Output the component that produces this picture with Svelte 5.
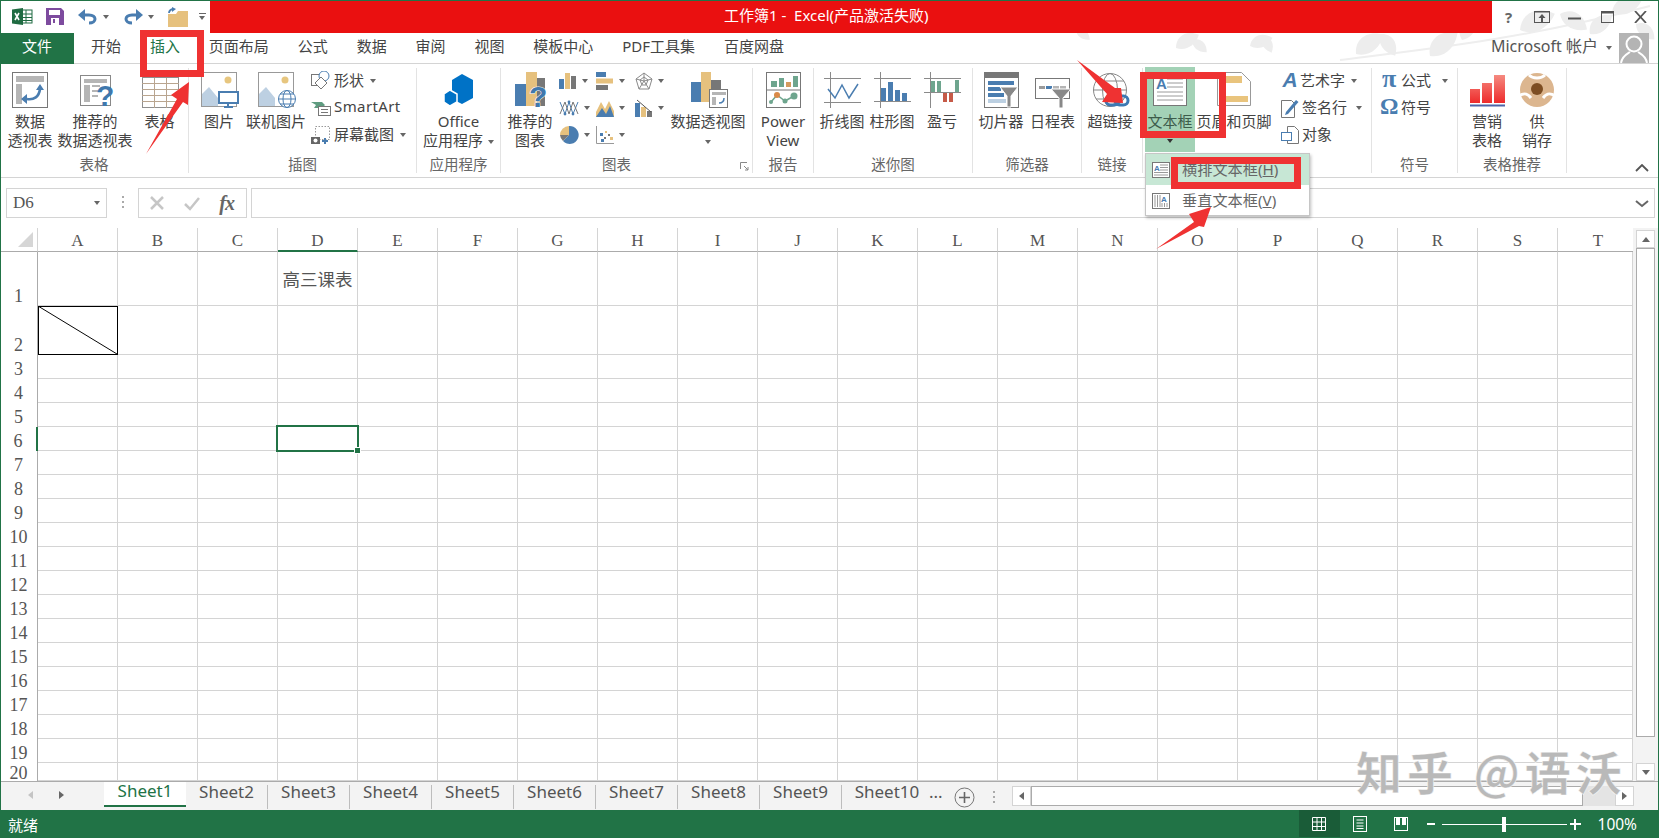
<script>
  const tabs = ['开始', '插入', '页面布局', '公式', '数据', '审阅', '视图', '模板中心', 'PDF工具集', '百度网盘'];
  const columns = 'ABCDEFGHIJKLMNOPQRST'.split('');
  const rows = Array.from({ length: 20 }, (_, i) => i + 1);
  const sheets = ['Sheet1', 'Sheet2', 'Sheet3', 'Sheet4', 'Sheet5', 'Sheet6', 'Sheet7', 'Sheet8', 'Sheet9', 'Sheet10'];
  // leaves in the title bar background: x, y, angle, scale
  const leaves = [
    [1076, 30, 35, 0.7], [1176, 48, -30, 1.1], [1192, 40, 40, 0.8], [1250, 46, -20, 1], [1262, 36, 60, 0.8],
    [1356, 54, -35, 1.4], [1380, 34, 55, 1.1], [1430, 56, -40, 1.5], [1462, 40, -60, 1.2], [1520, 30, -25, 1.6],
    [1560, 14, 30, 1.3], [1590, 34, -40, 1.2], [1612, 12, -20, 1.3], [1636, 24, 40, 1]
  ];
</script>

<div class="window">
  <header class="top">
    <svg class="leaves" width="1659" height="64" viewBox="0 0 1659 64">
      <path d="M1340 60 C1420 50 1520 40 1650 6" fill="none" stroke="#eee" stroke-width="2" />
      {#each leaves as [x, y, a, s]}
        <path d="M0 0 C5 -9 16 -10 24 0 C16 7 6 7 0 0Z" fill="#ededed" transform="translate({x} {y}) rotate({a}) scale({s})" />
      {/each}
    </svg>

    <div class="titlebar">
      <div class="qat">
        <svg class="q-excel" width="21" height="17" viewBox="0 0 21 17">
          <rect x="9" y="2" width="11" height="13" fill="#fff" stroke="#1f6b42" />
          <path d="M9 6h11M9 9.500h11M9 12.500h11M14 2v13" stroke="#1f6b42" fill="none" />
          <path d="M0 1.500 11 0v17L0 15.500Z" fill="#1f6b42" />
          <path d="M3 5l4 7M7 5l-4 7" stroke="#fff" stroke-width="1.600" />
        </svg>
        <svg class="q-save" width="18" height="17" viewBox="0 0 18 17">
          <path d="M0 0h15l3 3v14H0Z" fill="#7d4b9e" />
          <rect x="3" y="2" width="11" height="5" fill="#fff" />
          <rect x="5" y="10" width="8" height="7" fill="#fff" />
          <rect x="7" y="11" width="2" height="4" fill="#7d4b9e" />
        </svg>
        <svg class="q-undo" width="20" height="16" viewBox="0 0 20 16">
          <path d="M5 6h6c4 0 6 2 6 4s-2 4-6 4" fill="none" stroke="#4a7db0" stroke-width="3" />
          <path d="M7 0v12L0 6Z" fill="#4a7db0" />
        </svg>
        <i class="caret"></i>
        <svg class="q-redo" width="20" height="16" viewBox="0 0 20 16">
          <path d="M15 6H9C5 6 3 8 3 10s2 4 6 4" fill="none" stroke="#4a7db0" stroke-width="3" />
          <path d="M13 0v12l7-6Z" fill="#4a7db0" />
        </svg>
        <i class="caret"></i>
        <svg class="q-open" width="20" height="20" viewBox="0 0 20 20">
          <path d="M0 7h8l2-3h10v16H0Z" fill="#e6c17e" />
          <path d="M1 6c0-2 2-4 4-4" fill="none" stroke="#4a7db0" stroke-width="1.800" />
          <path d="M4 0l4 2-4 3Z" fill="#4a7db0" />
        </svg>
        <i class="more"></i>
      </div>
      <div class="redbar"><span>工作簿1 -&nbsp; Excel(产品激活失败)</span></div>
      <div class="controls">
        <span class="ctl help">?</span>
        <span class="ctl">
          <svg width="16" height="12" viewBox="0 0 16 12"><rect x=".5" y=".5" width="15" height="11" fill="none" stroke="#555" /><path d="M1 1h14" stroke="#555" /><path d="M8 3 4.500 7H7v4h2V7h2.500Z" fill="#555" /></svg>
        </span>
        <span class="ctl">
          <svg width="13" height="12" viewBox="0 0 13 12"><path d="M0 7.500h13" stroke="#555" stroke-width="2" /></svg>
        </span>
        <span class="ctl">
          <svg width="13" height="12" viewBox="0 0 13 12"><rect x=".5" y=".5" width="12" height="11" fill="none" stroke="#555" /><path d="M0 1.500h13" stroke="#555" stroke-width="2" /></svg>
        </span>
        <span class="ctl">
          <svg width="13" height="12" viewBox="0 0 13 12"><path d="M1 0l11 12M12 0 1 12" stroke="#555" stroke-width="1.800" /></svg>
        </span>
      </div>
    </div>

    <nav class="tabbar">
      <span class="file">文件</span>
      <ul>
        {#each tabs as tab}
          <li class:active={tab === '插入'}>{tab}</li>
        {/each}
      </ul>
      <div class="account">
        <span>Microsoft 帐户</span>
        <i class="caret"></i>
        <svg width="30" height="30" viewBox="0 0 30 30">
          <rect width="30" height="30" fill="#b4b4b4" />
          <circle cx="15" cy="11" r="7.500" fill="none" stroke="#fff" stroke-width="2" />
          <path d="M2 30c1-7 6-9 9-11M28 30c-1-7-6-9-9-11" fill="none" stroke="#fff" stroke-width="2" />
        </svg>
      </div>
    </nav>
  </header>

  <section class="ribbon">
    <div class="group g-tables">
      <div class="body">
        <div class="big">
          <svg viewBox="0 0 40 36">
            <rect x="2.500" y=".5" width="35" height="35" fill="#fff" stroke="#777" />
            <path d="M6 4h28v6H6ZM6 12h6v20H6Z" fill="#b5b5b5" />
            <path d="M17 27c7 1 12-2 13-10" fill="none" stroke="#4a7db0" stroke-width="2.600" />
            <path d="M26 18h8l-4-6ZM17 22v10l-6-5Z" fill="#4a7db0" />
          </svg>
          <span>数据<br />透视表</span>
        </div>
        <div class="big">
          <svg viewBox="0 0 40 36">
            <rect x="5.500" y="3.500" width="30" height="30" fill="#fff" stroke="#888" />
            <path d="M9 7h23v4H9ZM9 13h6v17H9ZM17 13h8v2h-8ZM17 18h6v2h-6ZM17 23h6v2h-6Z" fill="#b5b5b5" />
            <text x="21" y="34" class="qmark">?</text>
          </svg>
          <span>推荐的<br />数据透视表</span>
        </div>
        <div class="big">
          <svg viewBox="0 0 40 36">
            <rect x="2.500" y="5.500" width="36" height="30" fill="#fff" stroke="#8f8f8f" />
            <path d="M2 11.500h37M2 17.500h37M2 23.500h37M2 29.500h37M14.500 6v30M26.500 6v30" stroke="#b9a58f" fill="none" />
          </svg>
          <span>表格</span>
        </div>
      </div>
      <div class="label">表格</div>
    </div>

    <div class="group g-illus">
      <div class="body">
        <div class="big">
          <svg viewBox="0 0 40 36">
            <rect x="2.500" y=".5" width="35" height="34" fill="#fff" stroke="#999" />
            <circle cx="29" cy="8" r="3.500" fill="#e7c67f" />
            <path d="M3 34V22l7-7 9 11v8Z" fill="#bdd0e2" />
            <rect x="20" y="20" width="19" height="11" fill="#fff" stroke="#4a7db0" stroke-width="2" />
            <path d="M29 31v3M25 35h9" stroke="#4a7db0" stroke-width="2" />
          </svg>
          <span>图片</span>
        </div>
        <div class="big">
          <svg viewBox="0 0 40 36">
            <rect x="2.500" y=".5" width="35" height="34" fill="#fff" stroke="#999" />
            <circle cx="29" cy="8" r="3.500" fill="#e7c67f" />
            <path d="M3 34V22l7-7 9 11v8Z" fill="#bdd0e2" />
            <circle cx="31" cy="27" r="8.500" fill="#fff" stroke="#4a7db0" />
            <ellipse cx="31" cy="27" rx="4" ry="8.500" fill="none" stroke="#4a7db0" />
            <path d="M22.500 27h17M24 22h14M24 32h14" stroke="#4a7db0" />
          </svg>
          <span>联机图片</span>
        </div>
        <div class="smallcol">
          <div class="small">
            <svg width="20" height="20" viewBox="0 0 20 20">
              <rect x=".5" y="3.500" width="11" height="11" fill="#fff" stroke="#777" />
              <circle cx="13" cy="5" r="5" fill="#fff" stroke="#4a7db0" />
              <path d="M10 6 16 12 10 18 4 12Z" fill="#fff" stroke="#777" />
            </svg>
            <span>形状</span><i class="caret"></i>
          </div>
          <div class="small">
            <svg width="20" height="20" viewBox="0 0 20 20">
              <path d="M0 4h11l3 3-3 3H3l2-3Z" fill="#5f9c80" />
              <rect x="7.500" y="8.500" width="12" height="9" fill="#fff" stroke="#777" />
              <path d="M10 11.500h7M10 14.500h7" stroke="#777" />
            </svg>
            <span class="latin">SmartArt</span>
          </div>
          <div class="small">
            <svg width="20" height="20" viewBox="0 0 20 20">
              <rect x="4.500" y="1.500" width="14" height="13" fill="none" stroke="#999" stroke-dasharray="1.500 1.500" />
              <rect x="0" y="12" width="9" height="7" fill="#666" />
              <circle cx="4.500" cy="15.500" r="2" fill="#fff" />
              <path d="M14 13v6M11 16h6" stroke="#4a7db0" stroke-width="2" />
            </svg>
            <span>屏幕截图</span><i class="caret"></i>
          </div>
        </div>
      </div>
      <div class="label">插图</div>
    </div>

    <div class="group g-apps">
      <div class="body">
        <div class="big">
          <svg viewBox="0 0 40 36">
            <path d="M23 2 34 8v18l-11 6-10-5V8Z" fill="#0072c6" />
            <path d="M11 18l7 4v8l-7 4-6-4v-8Z" fill="#0072c6" stroke="#fff" stroke-width="1.500" />
          </svg>
          <span>Office<br />应用程序<i class="caret inline"></i></span>
        </div>
      </div>
      <div class="label">应用程序</div>
    </div>

    <div class="group g-charts">
      <div class="body">
        <div class="big">
          <svg viewBox="0 0 40 36">
            <rect x="5" y="12" width="11" height="22" fill="#4a7db0" />
            <rect x="16" y="0" width="11" height="34" fill="#e6c17e" />
            <rect x="27" y="6" width="8" height="28" fill="#777" />
            <text x="19" y="35" class="qmark outlined">?</text>
          </svg>
          <span>推荐的<br />图表</span>
        </div>
        <div class="charts">
          <div class="mini">
            <svg width="18" height="18" viewBox="0 0 18 18"><path d="M0 7h5v10H0Z" fill="#4a7db0" /><path d="M6 1h5v16H6Z" fill="#e6c17e" /><path d="M12 4h5v13h-5Z" fill="#777" /></svg>
            <i class="caret"></i>
          </div>
          <div class="mini">
            <svg width="18" height="18" viewBox="0 0 18 18"><path d="M0 0h10v5H0Z" fill="#4a7db0" /><path d="M0 6.500h17v5H0Z" fill="#e6c17e" /><path d="M0 13h12v5H0Z" fill="#777" /></svg>
            <i class="caret"></i>
          </div>
          <div class="mini">
            <svg width="18" height="18" viewBox="0 0 18 18"><path d="M9 1 17 7 14 17H4L1 7ZM9 5l4 3-2 5H7L5 8ZM9 1v8M1 7l8 2M17 7 9 9M4 17 9 9M14 17 9 9" fill="none" stroke="#8a8a8a" /></svg>
            <i class="caret"></i>
          </div>
          <div class="mini">
            <svg width="20" height="18" viewBox="0 0 20 18"><path d="M1 3 6 15 10 3 14 15 19 3" fill="none" stroke="#4a7db0" /><path d="M1 15 6 3 10 15 14 3 19 15" fill="none" stroke="#777" /><circle cx="10" cy="3" r="1.400" fill="#4a7db0" /><circle cx="6" cy="15" r="1.400" fill="#4a7db0" /><circle cx="14" cy="15" r="1.400" fill="#4a7db0" /></svg>
            <i class="caret"></i>
          </div>
          <div class="mini">
            <svg width="18" height="18" viewBox="0 0 18 18"><path d="M0 13 5 3 9 10 13 2 18 12V18H0Z" fill="#e6c17e" /><path d="M0 18 6 9 10 15 14 7 18 18Z" fill="#4a7db0" /></svg>
            <i class="caret"></i>
          </div>
          <div class="mini">
            <svg width="18" height="18" viewBox="0 0 18 18"><path d="M0 4h5v14H0Z" fill="#4a7db0" /><path d="M6 8h5v10H6Z" fill="#e6c17e" /><path d="M12 12h5v6h-5Z" fill="#777" /><path d="M2 1l7 6 7 6" fill="none" stroke="#555" /></svg>
            <i class="caret"></i>
          </div>
          <div class="mini">
            <svg width="20" height="20" viewBox="0 0 20 20"><path d="M10 10V1a9 9 0 1 1-6 15Z" fill="#4a7db0" /><path d="M10 10H1a9 9 0 0 1 9-9Z" fill="#e6c17e" /><path d="M10 10 4 16a9 9 0 0 1-3-6Z" fill="#777" /></svg>
            <i class="caret"></i>
          </div>
          <div class="mini">
            <svg width="18" height="18" viewBox="0 0 18 18"><path d="M.5 0v17.500H18" fill="none" stroke="#999" /><path d="M4 7h3v3H4ZM5 13h3v3H5Z" fill="#4a7db0" /><path d="M9 5h2v2H9ZM14 11h3v3h-3Z" fill="#e6c17e" /><path d="M12 8h2v2h-2ZM8 11h2v2H8Z" fill="#777" /></svg>
            <i class="caret"></i>
          </div>
        </div>
        <div class="big">
          <svg viewBox="0 0 40 36">
            <rect x="3" y="10" width="10" height="20" fill="#4a7db0" />
            <rect x="13" y="0" width="10" height="30" fill="#e6c17e" />
            <rect x="23" y="8" width="10" height="22" fill="#777" />
            <rect x="21.500" y="17.500" width="18" height="18" fill="#fff" stroke="#777" />
            <path d="M24 20h14v3H24ZM24 25h4v8h-4Z" fill="#b5b5b5" />
            <path d="M31 31c3 0 5-1 5-5" fill="none" stroke="#4a7db0" stroke-width="1.500" />
          </svg>
          <span>数据透视图<br /><i class="caret solo"></i></span>
        </div>
      </div>
      <div class="label">图表</div>
      <svg class="launcher" width="9" height="9" viewBox="0 0 9 9"><path d="M.5 7V.5H7M4 4l4 4M8 5v3H5" fill="none" stroke="#888" /></svg>
    </div>

    <div class="group g-report">
      <div class="body">
        <div class="big">
          <svg viewBox="0 0 40 36">
            <rect x="3.500" y=".5" width="34" height="35" fill="#fff" stroke="#777" />
            <path d="M3 18h35" stroke="#777" />
            <path d="M8 9h6v6H8Z" fill="#6ea58e" /><path d="M16 6h5v9h-5Z" fill="#6ea58e" /><path d="M23 10h5v5h-5Z" fill="#d49a5e" /><path d="M30 4h5v11h-5Z" fill="#6ea58e" />
            <path d="M8 30 14 23 22 29 31 24" fill="none" stroke="#6ea58e" stroke-width="1.500" />
            <circle cx="14" cy="23" r="3" fill="#d98a48" /><circle cx="8" cy="30" r="2" fill="#6ea58e" /><circle cx="22" cy="29" r="2.500" fill="#6ea58e" /><circle cx="31" cy="24" r="3.500" fill="#6ea58e" />
          </svg>
          <span>Power<br />View</span>
        </div>
      </div>
      <div class="label">报告</div>
    </div>

    <div class="group g-spark">
      <div class="body">
        <div class="big">
          <svg viewBox="0 0 40 36">
            <path d="M2 6.500h37M2 30.500h37M8.500 0v36" stroke="#8a8a8a" fill="none" />
            <path d="M6 17 13 26 20 13 27 26 36 12" fill="none" stroke="#4a7db0" stroke-width="1.500" />
          </svg>
          <span>折线图</span>
        </div>
        <div class="big">
          <svg viewBox="0 0 40 36">
            <path d="M2 6.500h37M2 29.500h37M8.500 0v36" stroke="#8a8a8a" fill="none" />
            <path d="M9 16h5v13H9ZM16 10h5v19h-5ZM23 18h5v11h-5ZM30 21h5v8h-5Z" fill="#4a7db0" />
          </svg>
          <span>柱形图</span>
        </div>
        <div class="big">
          <svg viewBox="0 0 40 36">
            <path d="M2 6.500h37M2 20.500h37M8.500 0v36" stroke="#8a8a8a" fill="none" />
            <path d="M9 9h4v11H9ZM15 9h4v11h-4ZM33 8h4v12h-4Z" fill="#6ea58e" />
            <path d="M21 21h4v9h-4ZM27 21h4v9h-4Z" fill="#c65a48" />
          </svg>
          <span>盈亏</span>
        </div>
      </div>
      <div class="label">迷你图</div>
    </div>

    <div class="group g-filter">
      <div class="body">
        <div class="big">
          <svg viewBox="0 0 40 36">
            <rect x="3.500" y=".5" width="34" height="35" fill="#fff" stroke="#777" />
            <path d="M3 0h35v6H3Z" fill="#777" />
            <path d="M7 9h26v4H7ZM7 15h13v4H7Z" fill="#4a7db0" /><path d="M7 21h16v4H7Z" fill="#4a7db0" /><path d="M7 27h18v4H7Z" fill="#bcd0e2" />
            <path d="M19 15h18l-7 9v11h-4V24Z" fill="#888" stroke="#fff" />
          </svg>
          <span>切片器</span>
        </div>
        <div class="big">
          <svg viewBox="0 0 40 36">
            <path d="M2 6h34v3H2Z" fill="#777" />
            <rect x="2.500" y="6.500" width="34" height="20" fill="#fff" stroke="#777" />
            <path d="M6 14h6v3H6Z" fill="#9a9a9a" /><path d="M13 14h6v3h-6Z" fill="#4a7db0" /><path d="M20 14h6v3h-6ZM27 14h6v3h-6Z" fill="#b5b5b5" />
            <path d="M18 17h20l-8 9v10h-4V26Z" fill="#888" stroke="#fff" />
          </svg>
          <span>日程表</span>
        </div>
      </div>
      <div class="label">筛选器</div>
    </div>

    <div class="group g-links">
      <div class="body">
        <div class="big">
          <svg viewBox="0 0 40 36">
            <circle cx="20" cy="18" r="16.500" fill="#fff" stroke="#888" />
            <ellipse cx="20" cy="18" rx="7.500" ry="16.500" fill="none" stroke="#888" />
            <path d="M3.500 18h33M6 9h28M6 27h28" stroke="#888" />
            <rect x="16" y="24" width="13" height="9" rx="4.500" fill="none" stroke="#3d79b3" stroke-width="3" />
            <rect x="25" y="24" width="13" height="9" rx="4.500" fill="none" stroke="#3d79b3" stroke-width="3" />
          </svg>
          <span>超链接</span>
        </div>
      </div>
      <div class="label">链接</div>
    </div>

    <div class="group g-text">
      <div class="body">
        <div class="big hot">
          <svg viewBox="0 0 40 36">
            <rect x="3.500" y=".5" width="33" height="33" fill="#fff" stroke="#777" />
            <text x="6" y="17" class="letter">A</text>
            <path d="M17 7h16M17 11h16M17 15h16M7 20h26M7 24h26M7 28h26" stroke="#9a9a9a" />
          </svg>
          <span>文本框</span>
          <i class="caret dark"></i>
        </div>
        <div class="big">
          <svg viewBox="0 0 40 36">
            <path d="M3.500.5h24l9 9v24h-33Z" fill="#fff" stroke="#999" />
            <path d="M6 4h22v7H6ZM6 24h28v6H6Z" fill="#e9c47d" />
          </svg>
          <span>页眉和页脚</span>
        </div>
        <div class="smallcol">
          <div class="small">
            <span class="sym wordart">A</span>
            <span>艺术字</span><i class="caret"></i>
          </div>
          <div class="small">
            <svg width="18" height="20" viewBox="0 0 18 20">
              <path d="M.5 2.500h10l3 3v14H.5Z" fill="#fff" stroke="#777" />
              <path d="M5 14 15 2l2.500 2L7 16l-3 1Z" fill="#4a7db0" />
            </svg>
            <span>签名行</span><i class="caret wide"></i>
          </div>
          <div class="small">
            <svg width="18" height="20" viewBox="0 0 18 20">
              <path d="M6.500 1.500h7l4 4v13h-11Z" fill="#fff" stroke="#777" />
              <rect x=".5" y="7.500" width="10" height="8" fill="#fff" stroke="#4a7db0" />
            </svg>
            <span>对象</span>
          </div>
        </div>
      </div>
      <div class="label"></div>
    </div>

    <div class="group g-symbols">
      <div class="body">
        <div class="smallcol">
          <div class="small">
            <span class="sym">π</span><span>公式</span><i class="caret wide"></i>
          </div>
          <div class="small">
            <span class="sym omega">Ω</span><span>符号</span>
          </div>
        </div>
      </div>
      <div class="label">符号</div>
    </div>

    <div class="group g-recommend">
      <div class="body">
        <div class="big">
          <svg viewBox="0 0 40 36">
            <defs>
              <linearGradient id="redbar" x1="0" y1="0" x2="0" y2="1"><stop offset="0" stop-color="#f58a80" /><stop offset="1" stop-color="#ee2b2b" /></linearGradient>
            </defs>
            <path d="M3 17h10v14H3ZM15 11h10v20H15ZM27 3h11v28H27Z" fill="url(#redbar)" />
            <path d="M3 33.500h35" stroke="#4f64a8" stroke-width="2" />
          </svg>
          <span>营销<br />表格</span>
        </div>
        <div class="big">
          <svg viewBox="0 0 40 36">
            <circle cx="20" cy="18" r="17" fill="#dcb68f" />
            <path d="M2 24c6-4 9-2 12 2M38 24c-6-4-9-2-12 2M12 3c4 4 12 4 16 0" fill="none" stroke="#fff" stroke-width="3" />
            <circle cx="20" cy="17" r="6" fill="#7d4d22" />
          </svg>
          <span>供<br />销存</span>
        </div>
      </div>
      <div class="label">表格推荐</div>
    </div>

    <svg class="collapse" width="14" height="8" viewBox="0 0 14 8"><path d="M1 7l6-6 6 6" fill="none" stroke="#555" stroke-width="1.800" /></svg>
  </section>

  <section class="formula">
    <div class="namebox"><span>D6</span><i class="caret"></i></div>
    <span class="vdots"></span>
    <div class="fxbox">
      <svg width="16" height="16" viewBox="0 0 16 16"><path d="M2 2l12 12M14 2 2 14" stroke="#c6c6c6" stroke-width="2.500" /></svg>
      <svg width="18" height="16" viewBox="0 0 18 16"><path d="M2 9l5 5L16 3" fill="none" stroke="#c6c6c6" stroke-width="2.500" /></svg>
      <span class="fx">fx</span>
    </div>
    <div class="input">
      <svg width="14" height="9" viewBox="0 0 14 9"><path d="M1 2l6 5 6-5" fill="none" stroke="#666" stroke-width="2" /></svg>
    </div>
  </section>

  <main class="sheet">
    <div class="grid">
      <div class="corner"><i></i></div>
      {#each columns as col}
        <div class="colhead" class:current={col === 'D'} class:last={col === 'T'}>{col}</div>
      {/each}
      {#each rows as row}
        <div class="rowhead" class:current={row === 6} class:cut={row === 20}>{row}</div>
        {#each columns as col}
          <div class="cell" class:title={row === 1 && col === 'D'} class:split={row === 2 && col === 'A'}>
            {#if row === 1 && col === 'D'}高三课表{/if}
            {#if row === 2 && col === 'A'}
              <svg class="diag" viewBox="0 0 80 49" preserveAspectRatio="none"><path d="M0 0 80 49" stroke="#000" /></svg>
            {/if}
            {#if row === 6 && col === 'D'}<i class="selection"></i>{/if}
          </div>
        {/each}
      {/each}
    </div>
    <div class="vscroll">
      <div class="btn"><i class="tri up"></i></div>
      <div class="vthumb"></div>
      <div class="btn"><i class="tri down"></i></div>
    </div>
  </main>

  <section class="sheetbar">
    <div class="nav"><i class="tri left faint"></i><i class="tri right"></i></div>
    {#each sheets as sheet, i}
      <div class="stab" class:on={i === 0} class:tail={i === sheets.length - 1}>{sheet}</div>
    {/each}
    <span class="ellipsis">...</span>
    <span class="addsheet">
      <svg width="21" height="21" viewBox="0 0 21 21"><circle cx="10.500" cy="10.500" r="9.500" fill="none" stroke="#777" /><path d="M10.500 5v11M5 10.500h11" stroke="#666" stroke-width="1.600" /></svg>
    </span>
    <span class="vdots short"></span>
    <div class="hscroll">
      <div class="btn"><i class="tri left"></i></div>
      <div class="hthumb"></div>
      <div class="htrack"></div>
      <div class="btn"><i class="tri right"></i></div>
    </div>
  </section>

  <footer class="status">
    <span>就绪</span>
    <div class="views">
      <span class="view on">
        <svg width="14" height="14" viewBox="0 0 14 14"><path d="M.5.5h13v13H.5ZM.5 5h13M.5 9.500h13M5 .5v13M9.500 .5v13" fill="none" stroke="#fff" /></svg>
      </span>
      <span class="view">
        <svg width="14" height="16" viewBox="0 0 14 16"><rect x=".5" y=".5" width="13" height="15" fill="none" stroke="#fff" /><path d="M3.500 4h7M3.500 7h7M3.500 10h7M3.500 12.500h7" stroke="#fff" /></svg>
      </span>
      <span class="view">
        <svg width="14" height="14" viewBox="0 0 14 14"><rect x=".5" y=".5" width="13" height="13" fill="none" stroke="#fff" /><path d="M2 0h4v8H2ZM8 0h4v8H8Z" fill="#fff" /></svg>
      </span>
    </div>
    <div class="zoom">
      <i class="minus"></i>
      <div class="slider"><i></i></div>
      <i class="plus"></i>
      <span class="pct">100%</span>
    </div>
  </footer>

  <!-- dropdown of the text box button -->
  <div class="menu">
    <div class="item on">
      <svg width="18" height="16" viewBox="0 0 18 16"><rect x=".5" y=".5" width="17" height="15" fill="#fff" stroke="#777" /><text x="2" y="8.500" class="letter tiny">A</text><path d="M8 3h8M8 5.500h8M8 8h8M2 10.500h14M2 13h14" stroke="#999" /></svg>
      <span>横排文本框(<u>H</u>)</span>
    </div>
    <div class="item">
      <svg width="18" height="16" viewBox="0 0 18 16"><rect x=".5" y=".5" width="17" height="15" fill="#fff" stroke="#777" /><text x="9" y="8.500" class="letter tiny">A</text><path d="M3 2v12M5.500 2v12M8 2v12M10 10v4M12.500 10v4M15 10v4" stroke="#999" /></svg>
      <span>垂直文本框(<u>V</u>)</span>
    </div>
  </div>

  <div class="watermark">知乎 @语沃</div>

  <!-- red marks drawn on top of the screenshot -->
  <svg class="marks" width="1659" height="838" viewBox="0 0 1659 838">
    <g fill="none" stroke="#ef3232" stroke-width="7">
      <rect x="143.500" y="33.500" width="57" height="40" />
      <rect x="1143.500" y="75.500" width="79" height="59" />
      <rect x="1174.500" y="160.500" width="123" height="25" />
    </g>
    <g fill="#ef3232">
      <path d="M146 154 177 99 171 95 189 82 188 105 183 102Z" />
      <path d="M1077 60 1115 88 1121 88 1123 103 1102 102 1107 94Z" />
      <path d="M1156 249 1194 222 1189 214 1211 207 1204 227 1199 226Z" />
    </g>
  </svg>
</div>

<style>
  :global(body) {
    margin: 0;
    background: #fff;
  }

  .window {
    position: relative;
    width: 1659px;
    height: 838px;
    overflow: hidden;
    display: flex;
    flex-direction: column;
    background: #fff;
    color: #444;
    font-family: "Noto Sans", "Noto Sans CJK SC", sans-serif;
    font-size: 15px;
  }
  .window::after {
    content: "";
    position: absolute;
    inset: 0;
    border: 1px solid #217346;
    pointer-events: none;
  }

  i { font-style: normal; display: block; }

  .caret {
    width: 0;
    height: 0;
    border-left: 3px solid transparent;
    border-right: 3px solid transparent;
    border-top: 4px solid #666;
    margin-left: 5px;
    flex: none;
  }
  .caret.inline { display: inline-block; vertical-align: middle; }
  .caret.solo { display: inline-block; margin: 0; vertical-align: middle; }
  .caret.dark { border-top-color: #333; margin: 8px 0 0; }

  /* title bar and tabs */
  .top { position: relative; flex: none; }
  .leaves { position: absolute; left: 0; top: 0; }
  .titlebar { position: relative; display: flex; height: 33px; }
  .qat {
    width: 210px;
    flex: none;
    display: flex;
    align-items: center;
    padding-left: 12px;
    box-sizing: border-box;
    background: #fff;
  }
  .q-save { margin-left: 13px; }
  .q-undo { margin-left: 14px; }
  .q-redo { margin-left: 14px; }
  .q-open { margin-left: 14px; }
  .more {
    width: 7px;
    height: 7px;
    margin-left: 11px;
    border-top: 1px solid #666;
  }
  .more::after {
    content: "";
    display: block;
    margin: 2px 0 0 0;
    border-left: 3.500px solid transparent;
    border-right: 3.500px solid transparent;
    border-top: 4px solid #666;
    width: 0;
  }
  .redbar {
    width: 1282px;
    flex: none;
    background: #ea1010;
    color: #fff;
    font-size: 15px;
    display: flex;
    align-items: center;
    box-sizing: border-box;
    padding: 0 0 4px 514px;
    white-space: nowrap;
  }
  .controls { display: flex; align-items: center; }
  .ctl {
    width: 33px;
    display: flex;
    justify-content: center;
    align-items: center;
    color: #666;
  }
  .help { font-weight: 700; font-size: 15px; }

  .tabbar {
    position: relative;
    height: 31px;
    display: flex;
    align-items: stretch;
    box-sizing: border-box;
    border-bottom: 1px solid #d4d4d4;
  }
  .file {
    width: 74px;
    flex: none;
    margin-bottom: -1px;
    padding-bottom: 6px;
    box-sizing: border-box;
    background: #217346;
    color: #fff;
    display: flex;
    align-items: center;
    justify-content: center;
  }
  .tabbar ul {
    list-style: none;
    margin: 0;
    padding: 0 0 6px 17px;
    display: flex;
    gap: 28.900px;
    align-items: center;
    white-space: nowrap;
  }
  .tabbar li.active { color: #217346; }
  .account {
    margin-left: auto;
    padding-right: 10px;
    display: flex;
    align-items: center;
    white-space: nowrap;
    color: #555;
    font-size: 16px;
  }
  .account span { padding-bottom: 6px; }
  .account .caret { margin: 0 7px 0 8px; }
  .account svg { display: block; }

  /* ribbon */
  .ribbon {
    flex: none;
    height: 114px;
    display: flex;
    box-sizing: border-box;
    border-bottom: 1px solid #d4d4d4;
    position: relative;
  }
  .group {
    position: relative;
    display: flex;
    flex-direction: column;
    box-sizing: border-box;
    border-right: 1px solid #e3e3e3;
    margin: 4px 0;
  }
  .group .body { flex: 1; display: grid; align-items: start; margin-top: -4px; }
  .label {
    height: 21px;
    line-height: 25px;
    text-align: center;
    font-size: 14.500px;
    color: #666;
    white-space: nowrap;
  }
  .g-tables { width: 189px; }
  .g-tables .body { grid-template-columns: 60px 70px 59px; }
  .g-illus { width: 228px; }
  .g-illus .body { grid-template-columns: 60px 54px 1fr; }
  .g-illus .smallcol { padding-left: 8px; }
  .g-apps { width: 84px; }
  .g-apps .body { grid-template-columns: 1fr; }
  .g-charts { width: 252px; }
  .g-charts .body { grid-template-columns: 58px 114px 70px; }
  .g-charts .label { padding-right: 20px; }
  .g-report { width: 61px; }
  .g-report .body { grid-template-columns: 1fr; }
  .g-spark { width: 159px; }
  .g-spark .body { grid-template-columns: repeat(3, 50px); padding-left: 3px; }
  .g-filter { width: 109px; }
  .g-filter .body { grid-template-columns: 52px 51px; padding-left: 2px; }
  .g-links { width: 61px; }
  .g-links .body { grid-template-columns: 56px; }
  .g-text { width: 229px; }
  .g-text .body { grid-template-columns: 50px 78px 1fr; padding-left: 2px; }
  .g-text .smallcol { padding-left: 8px; }
  .g-symbols { width: 86px; }
  .g-symbols .body { grid-template-columns: 1fr; padding-left: 8px; }
  .g-recommend { width: 109px; }
  .g-recommend .body { grid-template-columns: repeat(2, 50px); padding-left: 4px; }

  .big {
    display: flex;
    flex-direction: column;
    align-items: center;
    padding-top: 8px;
    min-width: 0;
    white-space: nowrap;
  }
  .big svg { width: 40px; height: 36px; display: block; flex: none; overflow: visible; }
  .big span { margin-top: 4px; line-height: 19px; text-align: center; }
  .big.hot {
    background: #a3d2b6;
    height: 85px;
    margin-top: 3px;
    box-sizing: border-box;
    padding-top: 5px;
    color: #3d5c4b;
  }

  .smallcol { display: flex; flex-direction: column; padding-top: 3px; white-space: nowrap; }
  .small { height: 27px; display: flex; align-items: center; gap: 3px; }
  .small span { margin-bottom: 3px; }
  .small .caret { margin-left: 3px; }
  .small .caret.wide { margin-left: 6px; }
  .g-symbols .small .caret.wide { margin-left: 8px; }
  .latin { letter-spacing: 0.4px; }
  .sym {
    width: 18px;
    flex: none;
    text-align: center;
    font: 700 26px/1 "Liberation Serif", serif;
    color: #4a7db0;
  }
  .omega { font-size: 23px; }
  .wordart { font: italic 700 21px/1 "Liberation Sans", sans-serif; margin-right: -2px; }

  .charts {
    display: grid;
    grid-template-columns: 37px 39px 38px;
    grid-auto-rows: 27px;
    padding-top: 3px;
  }
  .mini { display: flex; align-items: center; }
  .mini svg { flex: none; }

  .launcher { position: absolute; right: 3px; bottom: 2px; }
  .collapse { align-self: flex-end; margin: 0 10px 5px 68px; }

  svg text { font-family: "Liberation Sans", sans-serif; }
  .qmark { font-size: 30px; font-weight: 700; fill: #3f78ad; }
  .outlined { stroke: #fff; stroke-width: 1px; paint-order: stroke; }
  .letter { font-size: 15px; font-weight: 700; fill: #4a7db0; }
  .tiny { font-size: 8px; }

  /* formula bar */
  .formula {
    flex: none;
    height: 50px;
    display: flex;
    align-items: flex-start;
    box-sizing: border-box;
    padding: 10px 0 0 6px;
  }
  .namebox, .fxbox, .input {
    height: 30px;
    box-sizing: border-box;
    border: 1px solid #d4d4d4;
    display: flex;
    align-items: center;
  }
  .namebox {
    width: 101px;
    padding: 0 6px;
    justify-content: space-between;
    font: 17px "Liberation Serif", serif;
    color: #555;
  }
  .vdots {
    width: 2px;
    height: 13px;
    margin: 8px 14px 0 15px;
    flex: none;
    background: repeating-linear-gradient(#aaa 0 2px, transparent 2px 5px);
  }
  .vdots.short { margin: 9px 10px 0 18px; }
  .fxbox { width: 109px; justify-content: space-between; padding: 0 12px 0 10px; }
  .fx { font: italic 700 20px "Liberation Serif", serif; color: #666; letter-spacing: -1px; }
  .input {
    margin-left: 4px;
    width: 1404px;
    justify-content: flex-end;
    padding-right: 5px;
  }

  /* worksheet */
  .sheet { flex: none; height: 553px; display: flex; overflow: hidden; }
  .grid {
    width: 1633px;
    flex: none;
    display: grid;
    grid-template-columns: 38px repeat(19, 80px) 75px;
    grid-template-rows: 24px 54px 49px repeat(17, 24px) 18px;
    font: 17px "Liberation Serif", "Noto Sans CJK SC", serif;
    color: #555;
  }
  .corner { border-right: 1px solid #d4d4d4; border-bottom: 1px solid #ababab; position: relative; }
  .corner i {
    position: absolute;
    right: 4px;
    bottom: 4px;
    width: 0;
    height: 0;
    border-left: 15px solid transparent;
    border-bottom: 15px solid #d6d6d6;
  }
  .colhead {
    border-right: 1px solid #d4d4d4;
    border-bottom: 1px solid #ababab;
    display: flex;
    align-items: center;
    justify-content: center;
    padding-top: 3px;
    box-sizing: border-box;
  }
  .colhead.current { border-bottom: 2px solid #217346; }
  .colhead.last { padding-left: 5px; border-right: 0; }
  .rowhead {
    border-right: 1px solid #ababab;
    display: flex;
    align-items: flex-end;
    justify-content: center;
    line-height: 20px;
    font-size: 18px;
    box-sizing: border-box;
  }
  .rowhead.current { border-right: 2px solid #217346; }
  .rowhead.cut { align-items: flex-start; }
  .cell {
    position: relative;
    box-sizing: border-box;
    border-right: 1px solid #d4d4d4;
    border-bottom: 1px solid #d4d4d4;
  }
  .cell.title {
    display: flex;
    align-items: center;
    justify-content: center;
    font: 17.500px "Noto Sans CJK SC", serif;
    color: #555;
    white-space: nowrap;
  }
  .cell.split { outline: 1px solid #000; outline-offset: -1px; z-index: 1; }
  .diag { position: absolute; inset: 0; width: 100%; height: 100%; }
  .selection {
    position: absolute;
    left: -2px;
    top: -2px;
    right: -2px;
    bottom: -2px;
    border: 2px solid #217346;
    z-index: 2;
  }
  .selection::after {
    content: "";
    position: absolute;
    right: -4px;
    bottom: -4px;
    width: 5px;
    height: 5px;
    background: #217346;
    border: 1px solid #fff;
  }

  .tri { width: 0; height: 0; border: 4px solid transparent; }
  .tri.up { border-bottom: 5px solid #666; border-top: 0; }
  .tri.down { border-top: 5px solid #666; border-bottom: 0; }
  .tri.left { border-right: 5px solid #666; border-left: 0; }
  .tri.right { border-left: 5px solid #666; border-right: 0; }
  .tri.faint { border-right-color: #c4c4c4; }

  .vscroll {
    flex: 1;
    display: flex;
    flex-direction: column;
    box-sizing: border-box;
    padding: 2px 4px 0 3px;
    background: #f3f3f3;
  }
  .btn {
    background: #fff;
    border: 1px solid #d4d4d4;
    box-sizing: border-box;
    display: flex;
    align-items: center;
    justify-content: center;
    flex: none;
  }
  .vscroll .btn { height: 18px; }
  .vthumb {
    height: 489px;
    background: #fff;
    border: 1px solid #ababab;
    box-sizing: border-box;
    margin-bottom: auto;
  }

  /* sheet tabs */
  .sheetbar {
    flex: none;
    height: 29px;
    box-sizing: border-box;
    display: flex;
    align-items: flex-start;
    background: #f3f3f3;
    border-top: 1px solid #ababab;
    white-space: nowrap;
  }
  .nav { width: 104px; flex: none; display: flex; align-items: center; gap: 26px; padding: 9px 0 0 28px; box-sizing: border-box; }
  .stab {
    width: 82px;
    flex: none;
    height: 24px;
    box-sizing: border-box;
    margin-top: 3px;
    line-height: 14px;
    text-align: center;
    font-size: 17px;
    color: #555;
    border-right: 1px solid #bdbdbd;
  }
  .stab.on {
    margin-top: 0;
    height: 25px;
    line-height: 17px;
    background: #fff;
    color: #217346;
    border-right: 0;
    border-bottom: 2px solid #217346;
  }
  .stab.tail { border-right: 0; width: 90px; }
  .ellipsis { font-size: 17px; color: #555; margin: 0 0 0 -3px; line-height: 20px; }
  .addsheet { margin: 5px 0 0 11px; display: block; }
  .addsheet svg { display: block; }
  .hscroll {
    margin: 4px 25px 0 auto;
    width: 622px;
    height: 20px;
    display: flex;
    flex: none;
  }
  .hscroll .btn { width: 19px; }
  .hthumb { width: 552px; background: #fff; border: 1px solid #ababab; box-sizing: border-box; }
  .htrack { flex: 1; background: #e4e4e4; }

  /* status bar */
  .status {
    flex: none;
    height: 28px;
    background: #217346;
    color: #fff;
    display: flex;
    align-items: center;
    padding-left: 8px;
    box-sizing: border-box;
  }
  .views { margin-left: auto; display: flex; height: 100%; }
  .view { width: 41px; display: flex; align-items: center; justify-content: center; }
  .view.on { background: #1a5c38; }
  .zoom { display: flex; align-items: center; margin-left: 5px; padding-right: 22px; }
  .minus { width: 8px; height: 2px; background: #fff; }
  .plus {
    width: 11px;
    height: 11px;
    margin-left: 3px;
    background:
      linear-gradient(#fff, #fff) center / 11px 2px no-repeat,
      linear-gradient(#fff, #fff) center / 2px 11px no-repeat;
  }
  .slider { position: relative; width: 125px; height: 1px; background: #fff; margin-left: 7px; }
  .slider i {
    position: absolute;
    left: 60px;
    top: -7px;
    width: 4px;
    height: 15px;
    background: #fff;
  }
  .pct { margin-left: 17px; font-size: 15.500px; }

  /* overlays */
  .menu {
    position: absolute;
    left: 1145px;
    top: 153px;
    width: 165px;
    height: 63px;
    box-sizing: border-box;
    background: #fff;
    border: 1px solid #c6c6c6;
    box-shadow: 1px 2px 3px rgba(0, 0, 0, 0.25);
    z-index: 3;
    font-size: 15.200px;
    color: #666;
  }
  .item { height: 31px; display: flex; align-items: center; gap: 12px; padding-left: 6px; box-sizing: border-box; }
  .item span { padding-bottom: 4px; }
  .item.on { background: #c7e7d5; }
  .item svg { flex: none; }

  .watermark {
    position: absolute;
    left: 1356px;
    top: 738px;
    z-index: 4;
    font: 700 46px/64px "Noto Sans CJK SC", sans-serif;
    letter-spacing: 5px;
    color: #b9b9b9;
    white-space: nowrap;
    -webkit-text-stroke: 0.7px rgba(255, 255, 255, 0.7);
  }

  .marks { position: absolute; left: 0; top: 0; z-index: 5; pointer-events: none; }
</style>
